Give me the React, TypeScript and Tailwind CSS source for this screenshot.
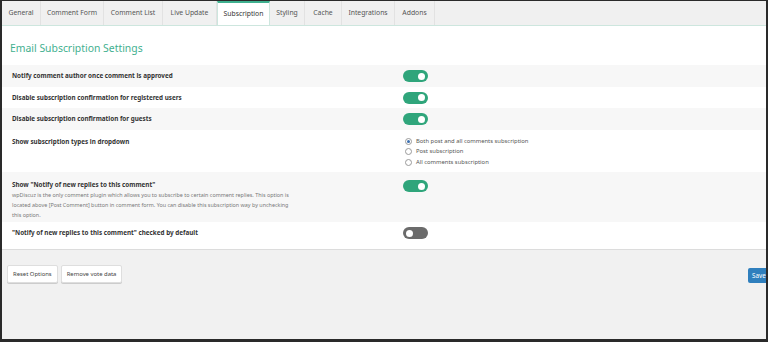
import React from "react";

const tabs = [
  { label: "General", w: "w-[39px]" },
  { label: "Comment Form", w: "w-[63px]" },
  { label: "Comment List", w: "w-[59px]" },
  { label: "Live Update", w: "w-[54px]" },
  { label: "Subscription", w: "w-[53px]", active: true },
  { label: "Styling", w: "w-[35px]" },
  { label: "Cache", w: "w-[37px]" },
  { label: "Integrations", w: "w-[53px]" },
  { label: "Addons", w: "w-[40px]" },
];

function Toggle({ on = true }: { on?: boolean }) {
  return (
    <div
      className={
        "w-[25px] h-[12px] rounded-full flex items-center px-[3px] " +
        (on ? "bg-[#2fa57b] justify-end" : "bg-[#6b6b6b] justify-start")
      }
    >
      <div className="w-[7px] h-[7px] rounded-full bg-white" />
    </div>
  );
}

function Radio({ checked, label }: { checked?: boolean; label: string }) {
  return (
    <div className="flex items-center gap-[4px] h-[10.5px]">
      <div className="w-[7px] h-[7px] rounded-full border border-[#9a9a9a] bg-white flex items-center justify-center">
        {checked && <div className="w-[3px] h-[3px] rounded-full bg-[#3b6fb0]" />}
      </div>
      <span className="text-[5.85px] text-[#555]">{label}</span>
    </div>
  );
}

export default function App() {
  return (
    <div
      className="w-[768px] h-[342px] overflow-hidden border-l-2 border-t border-r-2 border-b-[3px] border-[#2a2a2a] bg-[#f1f1f1] flex flex-col"
      style={{ fontFamily: '"Noto Sans", "Open Sans", sans-serif' }}
    >
      {/* tabs */}
      <div className="h-[25px] flex border-b border-[#cde6de] bg-[#f0f0f0] shrink-0">
        {tabs.map((t) => (
          <div
            key={t.label}
            className={
              t.w +
              " h-full flex items-center justify-center text-[6.8px] border-r border-[#e2e2e2] " +
              (t.active
                ? "bg-white border-t-2 border-t-[#3fb08f] border-l border-l-[#cde6de] border-r-[#cde6de] text-[#333] -mb-px h-[25px]"
                : "text-[#555]")
            }
          >
            {t.label}
          </div>
        ))}
      </div>

      {/* content */}
      <div className="bg-white h-[224px] shrink-0 border-b border-[#dcdcdc] flex flex-col">
        <div className="h-[39px] flex items-center pl-[8px] pt-[6px] text-[10.4px] text-[#3fb08f] shrink-0">
          Email Subscription Settings
        </div>
        <div className="flex flex-col">
          <div className="h-[22px] bg-[#f7f7f7] flex items-center">
            <div className="w-[401px] pl-[10px] text-[6.3px] font-bold text-[#333]">
              Notify comment author once comment is approved
            </div>
            <Toggle />
          </div>
          <div className="h-[21px] flex items-center">
            <div className="w-[401px] pl-[10px] text-[6.3px] font-bold text-[#333]">
              Disable subscription confirmation for registered users
            </div>
            <Toggle />
          </div>
          <div className="h-[22px] bg-[#f7f7f7] flex items-center">
            <div className="w-[401px] pl-[10px] text-[6.3px] font-bold text-[#333]">
              Disable subscription confirmation for guests
            </div>
            <Toggle />
          </div>
          <div className="h-[42px] flex items-start pt-[6px]">
            <div className="w-[401px] pl-[10px] text-[6.3px] font-bold text-[#333] pt-[1px]">
              Show subscription types in dropdown
            </div>
            <div className="flex flex-col pl-[2px]">
              <Radio checked label="Both post and all comments subscription" />
              <Radio label="Post subscription" />
              <Radio label="All comments subscription" />
            </div>
          </div>
          <div className="h-[50px] bg-[#f7f7f7] flex items-start pt-[8px]">
            <div className="w-[401px] pl-[10px] pr-[108px]">
              <div className="text-[6.3px] font-bold text-[#333] leading-[10px]">
                Show "Notify of new replies to this comment"
              </div>
              <div className="text-[5.4px] text-[#777] leading-[10px]">
                wpDiscuz is the only comment plugin which allows you to subscribe to certain comment replies. This option is located above [Post Comment] button in comment form. You can disable this subscription way by unchecking this option.
              </div>
            </div>
            <Toggle />
          </div>
          <div className="h-[22px] flex items-center">
            <div className="w-[401px] pl-[10px] text-[6.3px] font-bold text-[#333]">
              "Notify of new replies to this comment" checked by default
            </div>
            <Toggle on={false} />
          </div>
        </div>
      </div>

      {/* footer */}
      <div className="flex items-start justify-between pt-[15px] pl-[5px]">
        <div className="flex gap-[3px]">
          <button className="h-[18px] px-[5px] bg-white border border-[#dedede] rounded-[2px] text-[5.9px] text-[#444] shadow-[0_1px_0_#ccc]">
            Reset Options
          </button>
          <button className="h-[18px] px-[5px] bg-white border border-[#dedede] rounded-[2px] text-[5.9px] text-[#444] shadow-[0_1px_0_#ccc]">
            Remove vote data
          </button>
        </div>
        <div className="mt-[3px] h-[15px] w-[18px] overflow-hidden bg-[#2f7fbd] rounded-l-[2px] flex items-center pl-[4px] text-[6.3px] text-white">
          Save
        </div>
      </div>
    </div>
  );
}
